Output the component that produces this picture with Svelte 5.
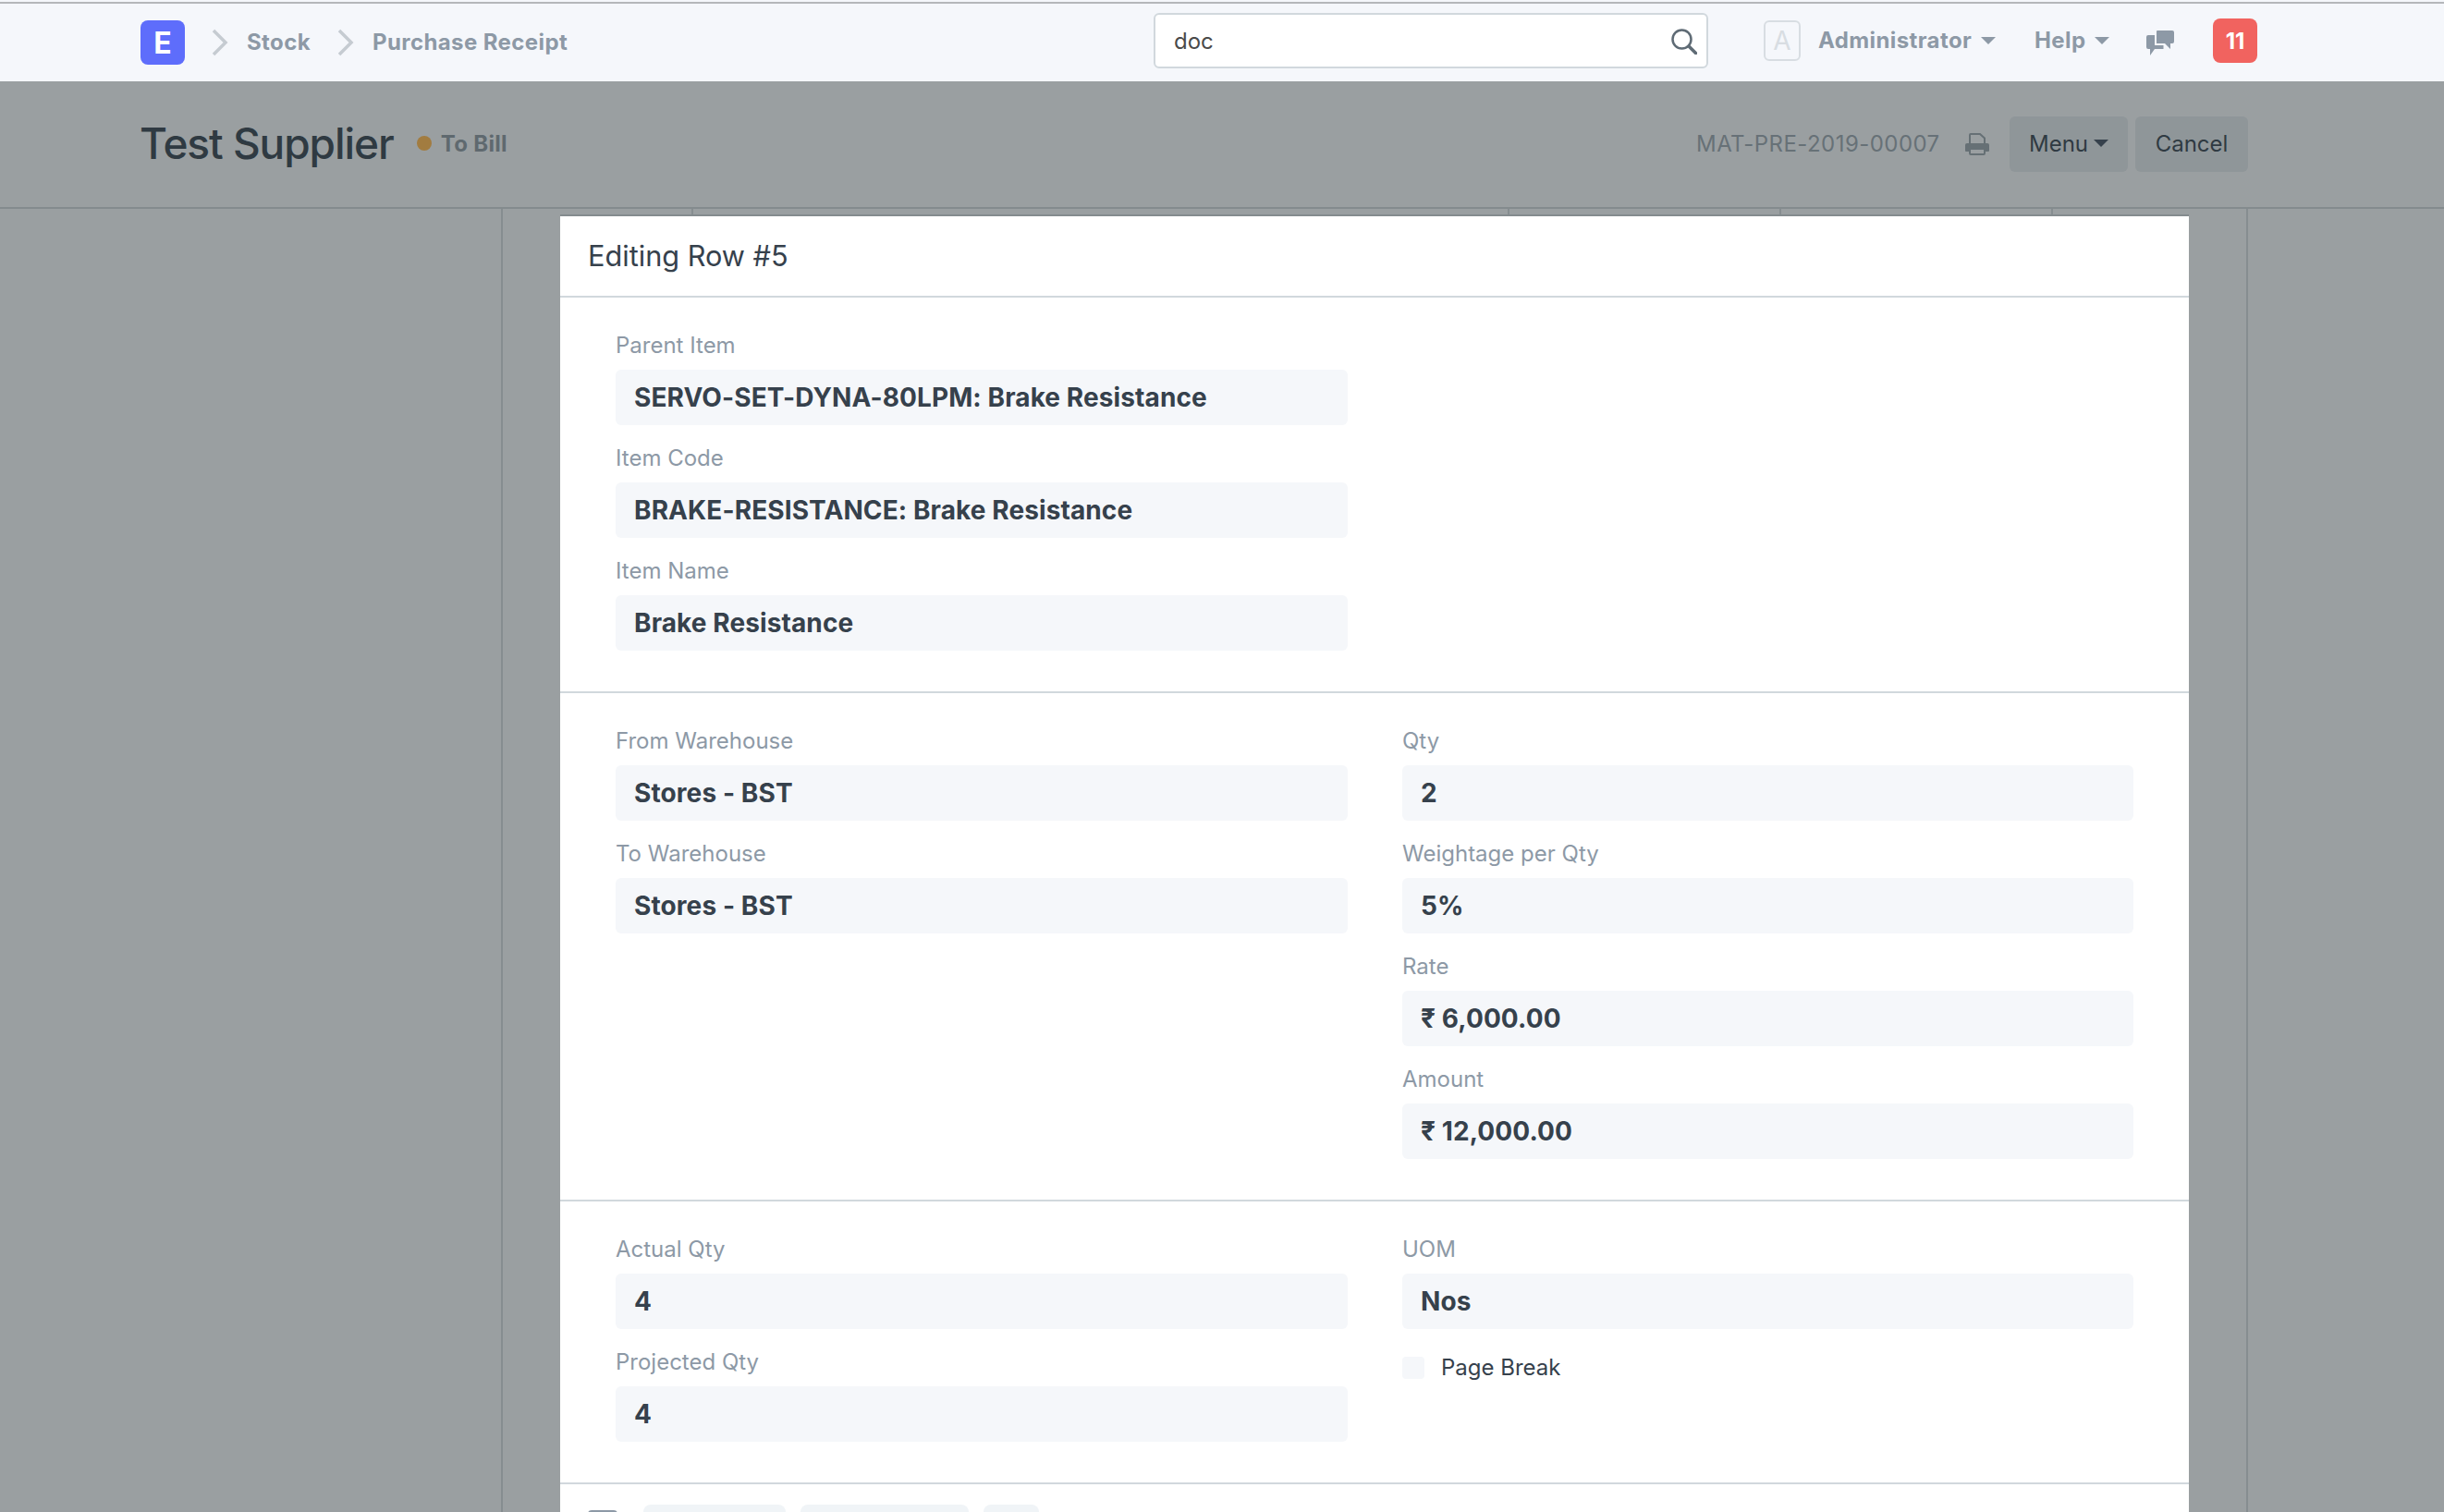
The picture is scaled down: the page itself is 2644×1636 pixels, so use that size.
<script>
  const sections = [
    {
      left: [
        { label: 'Parent Item', value: 'SERVO-SET-DYNA-80LPM: Brake Resistance' },
        { label: 'Item Code', value: 'BRAKE-RESISTANCE: Brake Resistance' },
        { label: 'Item Name', value: 'Brake Resistance' }
      ],
      right: []
    },
    {
      left: [
        { label: 'From Warehouse', value: 'Stores - BST' },
        { label: 'To Warehouse', value: 'Stores - BST' }
      ],
      right: [
        { label: 'Qty', value: '2' },
        { label: 'Weightage per Qty', value: '5%' },
        { label: 'Rate', value: '₹ 6,000.00' },
        { label: 'Amount', value: '₹ 12,000.00' }
      ]
    },
    {
      left: [
        { label: 'Actual Qty', value: '4' },
        { label: 'Projected Qty', value: '4' }
      ],
      right: [{ label: 'UOM', value: 'Nos' }],
      pageBreak: true
    }
  ];
</script>

<div class="page">
  <div class="topline"></div>
  <nav class="navbar">
    <div class="logo">E</div>
    <svg class="crumb" viewBox="0 0 18 30"><path d="M2 2l13 13L2 28" /></svg>
    <span class="crumb-text">Stock</span>
    <svg class="crumb" viewBox="0 0 18 30"><path d="M2 2l13 13L2 28" /></svg>
    <span class="crumb-text">Purchase Receipt</span>

    <div class="search">
      <span>doc</span>
      <svg viewBox="0 0 28 28"><circle cx="11.5" cy="11.5" r="10" /><path class="handle" d="M19 19l7.5 7.5" /></svg>
    </div>
    <div class="avatar">A</div>
    <span class="nav-link admin">Administrator<i class="caret"></i></span>
    <span class="nav-link help">Help<i class="caret"></i></span>
    <svg class="chat" viewBox="0 0 30 27">
      <path d="M12 0h16a2 2 0 0 1 2 2v10a2 2 0 0 1-2 2h-2v6l-6-6h-9V1a1 1 0 0 1 1-1z" />
      <path d="M2 5h7v11h9.5v4H9l-5 7v-7H2a2 2 0 0 1-2-2V7a2 2 0 0 1 2-2z" />
    </svg>
    <div class="badge">11</div>
  </nav>

  <header class="page-head">
    <h1>Test Supplier</h1>
    <i class="dot"></i>
    <span class="status">To Bill</span>
    <span class="docname">MAT-PRE-2019-00007</span>
    <svg class="print" viewBox="0 0 26 24">
      <path class="paper" d="M5 11V2a1 1 0 0 1 1-1h10l5 4.5V11" />
      <path d="M2 11h22a2 2 0 0 1 2 2v6a1 1 0 0 1-1 1H1a1 1 0 0 1-1-1v-6a2 2 0 0 1 2-2z" />
      <path class="paper" d="M5 17h16v5a1 1 0 0 1-1 1H6a1 1 0 0 1-1-1z" />
    </svg>
    <div class="btn menu">Menu<i class="caret dark"></i></div>
    <div class="btn cancel">Cancel</div>
  </header>

  <main class="backdrop">
    <div class="container">
      <div class="strip">
        <span></span><span></span><span></span><span></span><span></span>
      </div>
      <div class="modal">
        <div class="modal-head">Editing Row #5</div>
        {#each sections as section}
          <section class="section">
            {#each [section.left, section.right] as col, i}
              <div class="col">
                {#each col as field}
                  <div class="field">
                    <div class="label">{field.label}</div>
                    <div class="value">{field.value}</div>
                  </div>
                {/each}
                {#if section.pageBreak && i === 1}
                  <div class="check">
                    <i></i>
                    <span>Page Break</span>
                  </div>
                {/if}
              </div>
            {/each}
          </section>
        {/each}
        <div class="modal-foot">
          <i class="foot-box"></i>
          <i class="foot-btn one"></i>
          <i class="foot-btn two"></i>
          <i class="foot-btn three"></i>
        </div>
      </div>
    </div>
  </main>
</div>

<style>
  :global(body) {
    margin: 0;
    background: #9a9fa1;
    font-family: Inter, "Liberation Sans", sans-serif;
  }

  .page {
    width: 2644px;
    height: 1636px;
    overflow: hidden;
  }

  .topline {
    height: 2px;
    background: #f5f7fb;
    border-bottom: 2px solid #b5b7ba;
  }

  .navbar {
    height: 84px;
    background: #f5f7fb;
    display: flex;
    align-items: center;
    padding-left: 152px;
  }

  .logo {
    width: 48px;
    height: 48px;
    border-radius: 8px;
    background: #5e6dfb;
    color: #fff;
    font-size: 32px;
    font-weight: 700;
    display: flex;
    align-items: center;
    justify-content: center;
  }

  .crumb {
    width: 18px;
    height: 30px;
    margin: 0 20px 0 29px;
    fill: none;
    stroke: #c5cbd1;
    stroke-width: 3.5;
  }

  .crumb-text {
    font-size: 24px;
    font-weight: 700;
    letter-spacing: 0.4px;
    color: #8d99a6;
    white-space: nowrap;
    padding-bottom: 1px;
  }

  .search {
    width: 600px;
    height: 60px;
    box-sizing: border-box;
    position: absolute;
    left: 1248px;
    top: 14px;
    background: #fff;
    border: 2px solid #d1d8dd;
    border-radius: 6px;
    padding: 1px 10px 0 20px;
    display: flex;
    align-items: center;
    justify-content: space-between;
    font-size: 24px;
    color: #4a4a4a;
  }

  .search svg {
    width: 28px;
    height: 28px;
    fill: none;
    stroke: #5f6b75;
    stroke-width: 2.5;
  }

  .search .handle {
    stroke-width: 3.5;
    stroke-linecap: round;
  }

  .avatar {
    position: absolute;
    left: 1908px;
    top: 22px;
    width: 40px;
    height: 44px;
    box-sizing: border-box;
    border: 2px solid #d8dde2;
    border-radius: 6px;
    color: #d8dde2;
    font-size: 28px;
    display: flex;
    align-items: center;
    justify-content: center;
  }

  .nav-link {
    position: absolute;
    top: 29px;
    font-size: 24px;
    font-weight: 700;
    letter-spacing: 0.4px;
    color: #8d99a6;
    display: flex;
    align-items: center;
  }

  .admin { left: 1967px; }
  .help { left: 2201px; }

  .caret {
    width: 0;
    height: 0;
    margin-left: 10px;
    border-left: 8px solid transparent;
    border-right: 8px solid transparent;
    border-top: 8px solid #8d99a6;
  }

  .caret.dark {
    border-top-color: #36414c;
    margin-left: 6px;
  }

  .chat {
    position: absolute;
    left: 2322px;
    top: 33px;
    width: 30px;
    height: 27px;
    fill: #8d99a6;
  }

  .badge {
    position: absolute;
    left: 2394px;
    top: 20px;
    width: 48px;
    height: 48px;
    border-radius: 8px;
    background: #f1635f;
    color: #fff;
    font-size: 24px;
    font-weight: 700;
    display: flex;
    align-items: center;
    justify-content: center;
  }

  .page-head {
    height: 134px;
    padding-bottom: 2px;
    border-bottom: 2px solid #848b8e;
    padding-left: 152px;
    position: relative;
    display: flex;
    align-items: center;
    color: #2f3a42;
  }

  h1 {
    margin: 0 0 0 -1px;
    font-size: 46px;
    font-weight: 500;
    letter-spacing: -1.05px;
  }

  .dot {
    width: 16px;
    height: 16px;
    border-radius: 50%;
    background: #a27c40;
    margin-left: 25px;
  }

  .status {
    font-size: 24px;
    font-weight: 700;
    letter-spacing: 0.3px;
    color: #5f696f;
    margin-left: 10px;
  }

  .docname {
    position: absolute;
    left: 1835px;
    top: calc(50% - 1px);
    transform: translateY(-50%);
    font-size: 24px;
    letter-spacing: 0.45px;
    color: #677177;
  }

  .print {
    position: absolute;
    left: 2126px;
    top: 56px;
    width: 26px;
    height: 24px;
    fill: #667075;
  }

  .print .paper {
    fill: #9a9fa1;
    stroke: #667075;
    stroke-width: 2;
  }

  .btn {
    position: absolute;
    top: 38px;
    height: 60px;
    padding-bottom: 2px;
    border-radius: 6px;
    background: #8f9699;
    font-size: 24px;
    display: flex;
    align-items: center;
    justify-content: center;
    box-sizing: border-box;
  }

  .menu { left: 2174px; width: 128px; }
  .cancel { left: 2310px; width: 122px; }

  .backdrop {
    height: 1410px;
    position: relative;
  }

  .container {
    margin-left: 542px;
    width: 1890px;
    height: 100%;
    border-left: 2px solid #868d90;
    border-right: 2px solid #868d90;
    box-sizing: border-box;
    padding: 0 62px;
  }

  .strip {
    height: 6px;
    border-bottom: 2px solid #848b8e;
    display: grid;
    grid-template-columns: 144px 883px 294px 294px 1fr;
  }

  .strip span {
    border-right: 2px solid #868d90;
  }

  .strip span:last-child {
    border-right: 0;
  }

  .modal {
    background: #fff;
    height: 1402px;
    color: #36414c;
  }

  .modal-head {
    height: 85px;
    padding-left: 30px;
    padding-bottom: 1px;
    border-bottom: 2px solid #d1d8dd;
    display: flex;
    align-items: center;
    font-size: 30.7px;
    color: #36414c;
  }

  .section {
    display: grid;
    grid-template-columns: 792px 791px;
    column-gap: 59px;
    padding: 40px 0 20px 60px;
    border-bottom: 2px solid #d1d8dd;
  }

  .field {
    height: 122px;
    display: flex;
    flex-direction: column;
  }

  .label {
    height: 38px;
    line-height: 24px;
    font-size: 24px;
    color: #8d99a6;
  }

  .value {
    height: 60px;
    border-radius: 6px;
    background: #f5f7fa;
    padding-left: 20px;
    display: flex;
    align-items: center;
    font-size: 28px;
    font-weight: 700;
    letter-spacing: 0.1px;
    color: #36414c;
  }

  .check {
    display: flex;
    align-items: center;
    margin-top: 3px;
    font-size: 24px;
  }

  .check i {
    width: 24px;
    height: 24px;
    border-radius: 4px;
    background: #f5f7fa;
    margin-right: 18px;
  }

  .modal-foot {
    display: flex;
    padding: 22px 0 0 30px;
  }

  .foot-box {
    width: 32px;
    height: 30px;
    margin: 6px 28px 0 0;
    border-radius: 4px;
    background: #8d99a6;
  }

  .foot-btn {
    height: 60px;
    border-radius: 8px;
    background: #f0f4f7;
    margin-right: 16px;
  }

  .one { width: 154px; }
  .two { width: 182px; }
  .three { width: 60px; }
</style>
